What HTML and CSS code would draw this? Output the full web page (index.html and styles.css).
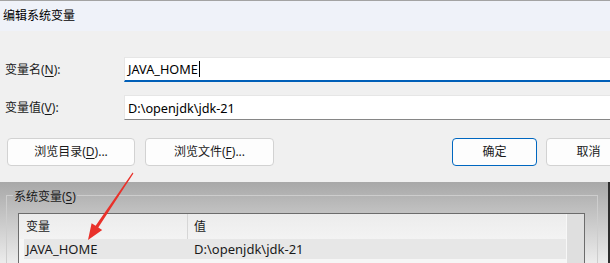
FILE: index.html
```html
<!DOCTYPE html>
<html lang="zh-CN">
<head>
    <meta charset="UTF-8">
    <title>编辑系统变量</title>
    <link rel="stylesheet" href="styles.css">
</head>
<body>
    <!-- Dialog -->
    <div class="dialog">
        <div class="topline"></div>
        <div class="titlebar">编辑系统变量</div>

        <div class="form">
            <div class="field">
                <label>变量名(<u>N</u>):</label>
                <div class="input active">JAVA_HOME<span class="caret"></span></div>
            </div>
            <div class="field">
                <label>变量值(<u>V</u>):</label>
                <div class="input">D:\openjdk\jdk-21</div>
            </div>
        </div>

        <div class="actions">
            <button class="btn browse-dir">浏览目录(<u>D</u>)...</button>
            <button class="btn browse-file">浏览文件(<u>F</u>)...</button>
            <button class="btn ok">确定</button>
            <button class="btn cancel">取消</button>
        </div>
    </div>

    <!-- Parent window behind the dialog -->
    <div class="parent">
        <fieldset class="group">
            <legend>系统变量(<u>S</u>)</legend>
            <div class="list">
                <div class="list-body">
                    <div class="list-head">
                        <div class="name">变量</div>
                        <div class="value">值</div>
                    </div>
                    <div class="list-row">
                        <div class="name">JAVA_HOME</div>
                        <div class="value">D:\openjdk\jdk-21</div>
                    </div>
                </div>
                <div class="scrollbar"></div>
            </div>
        </fieldset>
    </div>

    <!-- Annotation arrow -->
    <svg class="arrow" width="610" height="263" viewBox="0 0 610 263">
        <polygon points="132.6,172.6 133.4,173.4 98.3,227.6 102.2,230.1 88,240 91.6,223.2 95.6,225.8" fill="#e9312a"/>
    </svg>
</body>
</html>
```

FILE: styles.css
```css
html, body {
    margin: 0;
    padding: 0;
}

body {
    width: 610px;
    height: 263px;
    overflow: hidden;
    position: relative;
    background-color: #f0f0f0;
    font-family: "Noto Sans", "Noto Sans CJK SC", sans-serif;
    font-size: 12px;
    line-height: 16px;
    color: #1a1a1a;
}

u {
    text-decoration-thickness: 1px;
    text-underline-offset: 2px;
}

.dialog {
    height: 182px;
}

.topline {
    height: 1px;
    background-color: #a3a3a3;
}

.titlebar {
    height: 30px;
    line-height: 30px;
    padding-left: 3px;
    background-color: #eff2f9;
    color: #000;
}

/* Name / value rows */
.form {
    display: flex;
    flex-direction: column;
    gap: 13px;
    padding: 26px 0 0 5px;
}

.field {
    display: flex;
    align-items: center;
    height: 25px;
}

.field label {
    width: 119px;
    flex-shrink: 0;
}

.input {
    flex: 1;
    height: 25px;
    box-sizing: border-box;
    display: flex;
    align-items: center;
    padding-left: 3px;
    background-color: #fff;
    border: 1px solid #e6e6e6;
    border-right: none;
    border-bottom-color: #868686;
    font-size: 12.7px;
    color: #000;
}

.input.active {
    border-bottom: 2px solid #005fb8;
}

.caret {
    width: 1px;
    height: 16px;
    margin-left: 1px;
    background-color: #000;
}

/* Buttons */
.actions {
    display: flex;
    margin-top: 18px;
    padding-left: 7px;
}

.btn {
    flex-shrink: 0;
    height: 28px;
    box-sizing: border-box;
    padding: 0;
    border: 1px solid #d2d2d2;
    border-radius: 4px;
    background-color: #fdfdfd;
    font: inherit;
    color: #1a1a1a;
}

.browse-dir {
    width: 128px;
}

.browse-file {
    width: 129px;
    margin-left: 10px;
}

.ok {
    width: 85px;
    margin-left: 178px;
    border-color: #0067c0;
}

.cancel {
    width: 85px;
    margin-left: 9px;
}

/* Dimmed parent window */
.parent {
    height: 81px;
    box-sizing: border-box;
    padding: 4px 10px 0 6px;
    border-right: 2px solid #2d2d2d;
    background: linear-gradient(#a8a8a8, #ececec);
}

.group {
    margin: 0;
    min-width: 0;
    padding: 0 12px 0 6px;
    border: 1px solid #cdcdcd;
}

.group legend {
    padding: 4px 1px 0;
    line-height: 14px;
}

.list {
    display: flex;
    height: 60px;
    margin: 9px 0 0 5px;
    border: 1px solid #6c6c6c;
}

.list-body {
    flex: 1;
    background-color: #f6f6f6;
}

.list-head {
    display: flex;
    height: 25px;
    background: linear-gradient(#ececec, #f3f3f3);
}

.list-head .name {
    width: 161px;
    padding-left: 7px;
    border-right: 1px solid #d6d6d6;
    display: flex;
    align-items: center;
}

.list-head .value {
    padding-left: 6px;
    display: flex;
    align-items: center;
}

.list-row {
    display: flex;
    align-items: center;
    height: 20px;
    margin-left: 5px;
    background-color: #e7e7e7;
    font-size: 13px;
}

.list-row .name {
    width: 161px;
    padding-left: 2px;
}

.list-row .value {
    padding-left: 7px;
}

.scrollbar {
    width: 17px;
    border-left: 1px solid #f7f7f7;
    background-color: #dfdfdf;
}

.arrow {
    position: absolute;
    top: 0;
    left: 0;
    pointer-events: none;
}
```
